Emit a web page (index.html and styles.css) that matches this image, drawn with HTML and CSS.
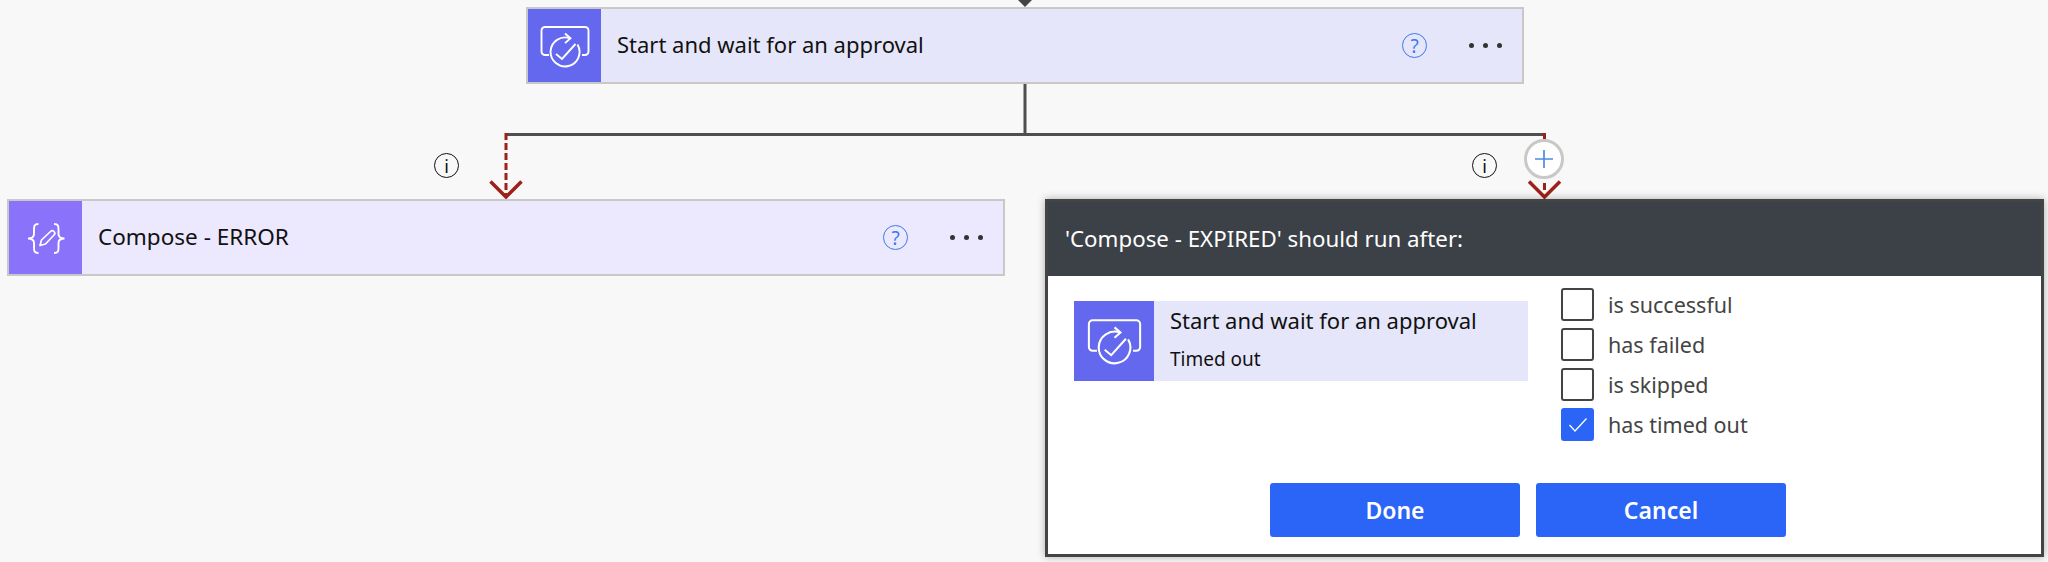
FILE: index.html
```html
<!DOCTYPE html>
<html lang="en">
<head>
    <meta charset="UTF-8">
    <title>Configure run after</title>
    <link rel="stylesheet" href="styles.css">
</head>
<body>
    <div class="canvas">

        <!-- connectors -->
        <svg class="wires" width="2048" height="562" viewBox="0 0 2048 562">
            <path d="M1018 0h14l-7 7z" fill="#444"/>
            <path d="M1025 83v51M505 134.500h1040" fill="none" stroke="#4f4f4f" stroke-width="3"/>
            <path d="M506 133v62" fill="none" stroke="#9e2119" stroke-width="3" stroke-dasharray="7 3"/>
            <path d="M490.500 181.500L506 197l15.500-15.500" fill="none" stroke="#9e2119" stroke-width="3.500"/>
            <path d="M1544.500 133v8M1544.500 183v7" fill="none" stroke="#9e2119" stroke-width="3"/>
            <path d="M1529 181.500l15.500 15.500 15.500-15.500" fill="none" stroke="#9e2119" stroke-width="3.500"/>
        </svg>

        <div class="card card-approval card-top">
            <div class="card-icon">
                <svg width="50" height="44" viewBox="0 0 50 44"><use href="#approval"/></svg>
            </div>
            <span class="card-title">Start and wait for an approval</span>
            <span class="help">?</span>
            <span class="more"><i></i><i></i><i></i></span>
        </div>

        <div class="card card-compose card-left">
            <div class="card-icon">
                <svg width="40" height="34" viewBox="0 0 40 34">
                    <path d="M12.500 3C8 3 8 5 8 9v4c0 3-2 4.500-6 4.500 4 0 6 1.500 6 4.500v4c0 4 0 6 4.500 6M28 3c4.500 0 4.500 2 4.500 6v4c0 3 2 4.500 6 4.500-4 0-6 1.500-6 4.500v4c0 4 0 6-4.500 6" fill="none" stroke="#fff" stroke-width="1.900"/>
                    <path d="M14 24.500l1.500-5.500 9-8.500c1-1 2.500-1 3.500 0s1 2.500 0 3.500l-8.500 9z" fill="none" stroke="#fff" stroke-width="1.700" stroke-linejoin="round"/>
                </svg>
            </div>
            <span class="card-title">Compose - ERROR</span>
            <span class="help">?</span>
            <span class="more"><i></i><i></i><i></i></span>
        </div>

        <span class="info info-left">i</span>
        <span class="info info-right">i</span>
        <span class="add">
            <svg width="18" height="18" viewBox="0 0 18 18"><path d="M9 0v18M0 9h18" stroke="#4a8be0" stroke-width="1.700"/></svg>
        </span>

        <!-- run after dialog -->
        <div class="dialog">
            <div class="dialog-head">'Compose - EXPIRED' should run after:</div>
            <div class="dialog-body">
                <div class="dialog-row">
                    <div class="parent">
                        <div class="parent-icon">
                            <svg width="55" height="48" viewBox="0 0 50 44"><use href="#approval"/></svg>
                        </div>
                        <div class="parent-text">
                            <div class="parent-title">Start and wait for an approval</div>
                            <div class="parent-status">Timed out</div>
                        </div>
                    </div>
                    <ul class="checks">
                        <li><span class="box"></span>is successful</li>
                        <li><span class="box"></span>has failed</li>
                        <li><span class="box"></span>is skipped</li>
                        <li>
                            <span class="box box-on">
                                <svg width="20" height="16" viewBox="0 0 20 16"><path d="M1.500 8l5.500 6L18.500 1.500" fill="none" stroke="#fff" stroke-width="1.300"/></svg>
                            </span>has timed out
                        </li>
                    </ul>
                </div>
                <div class="dialog-buttons">
                    <button class="btn">Done</button>
                    <button class="btn">Cancel</button>
                </div>
            </div>
        </div>
    </div>

    <svg class="defs" width="0" height="0">
        <symbol id="approval" viewBox="0 0 50 44">
            <path d="M9 31H5a3.500 3.500 0 0 1-3.500-3.500v-21A3.500 3.500 0 0 1 5 3h40a3.500 3.500 0 0 1 3.500 3.500v21A3.500 3.500 0 0 1 45 31h-3" fill="none" stroke="#fff" stroke-width="1.900"/>
            <path d="M30 14.300A14.500 14.500 0 1 0 37.500 20.500" fill="none" stroke="#fff" stroke-width="1.900"/>
            <path d="M25 9.500l5.500 4.800-5.500 4.800" fill="none" stroke="#fff" stroke-width="1.900"/>
            <path d="M16 30l6 5 13.500-15" fill="none" stroke="#fff" stroke-width="1.900"/>
        </symbol>
    </svg>
</body>
</html>
```
FILE: styles.css
```css
html, body {
    margin: 0;
    padding: 0;
    background-color: #f8f8f8;
    overflow: hidden;
}
.canvas {
    position: relative;
    width: 2048px;
    height: 562px;
    font-family: "Noto Sans", "Open Sans", sans-serif;
    color: #111;
}
.wires {
    position: absolute;
    left: 0;
    top: 0;
}
.defs {
    position: absolute;
}

/* action cards */
.card {
    position: absolute;
    display: flex;
    align-items: center;
    height: 77px;
    box-sizing: border-box;
    border: 2px solid #c8c8c8;
}
.card-top {
    left: 526px;
    top: 7px;
    width: 998px;
}
.card-left {
    left: 7px;
    top: 199px;
    width: 998px;
}
.card-approval {
    background-color: #e6e6fa;
}
.card-compose {
    background-color: #ece8fe;
}
.card-icon {
    display: flex;
    align-items: center;
    justify-content: center;
    flex: none;
    width: 73px;
    height: 100%;
}
.card-approval .card-icon {
    background-color: #6468ef;
}
.card-compose .card-icon {
    background-color: #8a72fb;
}
.card-title {
    flex: 1;
    margin-left: 16px;
    padding-bottom: 3px;
    font-size: 22px;
}
.card-compose .card-title {
    padding-bottom: 2px;
    font-size: 22.500px;
}
.help {
    display: flex;
    align-items: center;
    justify-content: center;
    width: 25px;
    height: 25px;
    box-sizing: border-box;
    border: 1.700px solid #3a78f2;
    border-radius: 50%;
    color: #3a78f2;
    font-size: 19px;
}
.more {
    display: flex;
    gap: 9px;
    margin: 0 20px 0 42px;
}
.more i {
    width: 5px;
    height: 5px;
    border-radius: 50%;
    background-color: #333;
}

/* markers on the connectors */
.info {
    position: absolute;
    display: flex;
    align-items: center;
    justify-content: center;
    width: 25px;
    height: 25px;
    box-sizing: border-box;
    border: 1.700px solid #111;
    border-radius: 50%;
    background-color: #f8f8f8;
    font-size: 18px;
}
.info-left {
    left: 434px;
    top: 153px;
}
.info-right {
    left: 1472px;
    top: 153px;
}
.add {
    position: absolute;
    left: 1524px;
    top: 139px;
    display: flex;
    align-items: center;
    justify-content: center;
    width: 40px;
    height: 40px;
    box-sizing: border-box;
    border: 3px solid #c8c8c8;
    border-radius: 50%;
    background-color: #fff;
}

/* dialog */
.dialog {
    position: absolute;
    left: 1045px;
    top: 199px;
    width: 999px;
    height: 358px;
    box-sizing: border-box;
    display: flex;
    flex-direction: column;
    border: 3px solid #444;
    background-color: #fff;
    box-shadow: 0 0 8px rgba(0, 0, 0, 0.3);
}
.dialog-head {
    display: flex;
    align-items: center;
    flex: none;
    height: 72px;
    padding: 0 0 2px 17px;
    background-color: #3c4047;
    color: #fff;
    font-size: 22.300px;
}
.dialog-body {
    flex: 1;
    padding: 12px 0 0 26px;
}
.dialog-row {
    display: flex;
}
.parent {
    display: flex;
    flex: none;
    width: 454px;
    height: 80px;
    margin-top: 13px;
    background-color: #e6e6fa;
}
.parent-icon {
    display: flex;
    align-items: center;
    justify-content: center;
    flex: none;
    width: 80px;
    background-color: #6468ef;
}
.parent-text {
    padding: 3px 0 0 16px;
}
.parent-title {
    font-size: 22px;
    line-height: 32px;
}
.parent-status {
    margin-top: 11px;
    font-size: 19px;
    line-height: 24px;
}
.checks {
    margin: 0 0 0 33px;
    padding: 0;
    list-style: none;
}
.checks li {
    display: flex;
    align-items: center;
    gap: 14px;
    height: 33px;
    margin-bottom: 7px;
    font-size: 21.500px;
    color: #444;
}
.box {
    display: flex;
    align-items: center;
    justify-content: center;
    flex: none;
    width: 33px;
    height: 33px;
    box-sizing: border-box;
    border: 2px solid #444;
    border-radius: 3px;
}
.box-on {
    border: none;
    background-color: #2b65f8;
}
.dialog-buttons {
    display: flex;
    gap: 16px;
    margin-top: 35px;
    padding-left: 196px;
}
.btn {
    width: 250px;
    height: 54px;
    border: none;
    border-radius: 3px;
    background-color: #2b65f8;
    color: #fff;
    font-family: inherit;
    font-size: 23px;
    font-weight: 600;
}
```
